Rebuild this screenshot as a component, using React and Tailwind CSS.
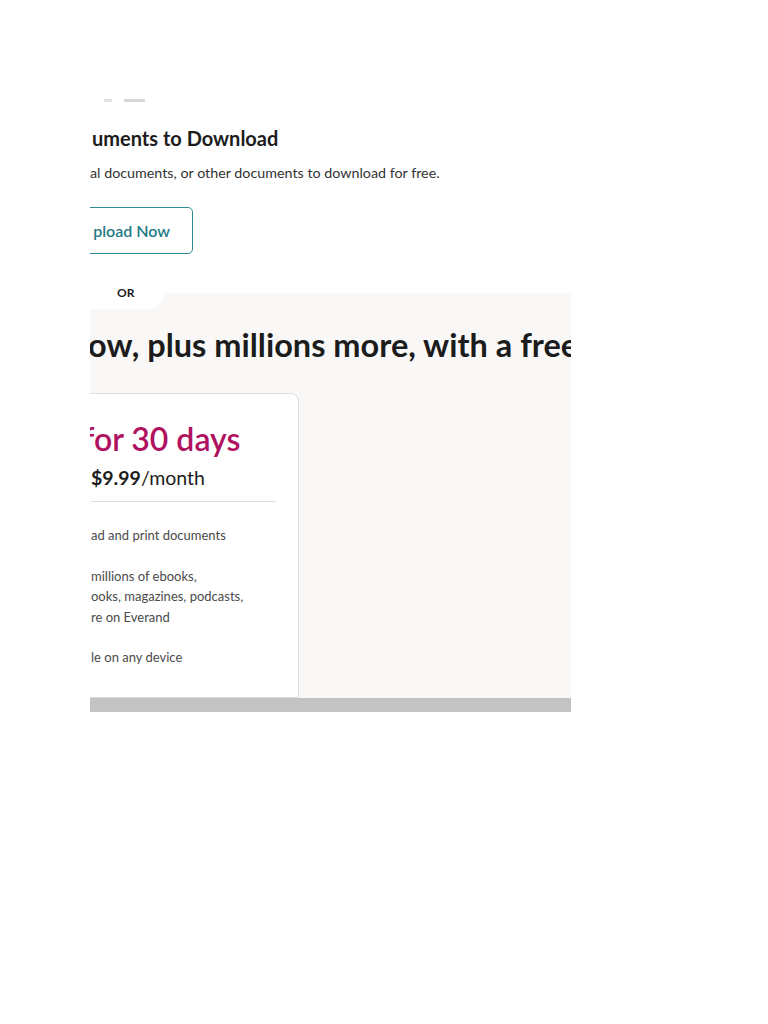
import React from 'react';

// Clipped crop of a document-download upsell panel
const features = [
  ['ad and print documents'],
  ['millions of ebooks,', 'ooks, magazines, podcasts,', 're on Everand'],
  ['le on any device'],
];

export default function App() {
  return (
    <div className="min-h-screen bg-white font-['Lato',sans-serif] text-[#1c1c1c]">
      <div className="ml-[90px] w-[481px] overflow-hidden pt-[94px]">
        {/* faint scan marks */}
        <div className="flex items-end gap-[12px] pl-[14px] h-[8px]">
          <div className="w-[8px] h-[3px] bg-[#e2e2e2]" />
          <div className="w-[21px] h-[3px] bg-[#d6d6d6]" />
        </div>

        <h2 className="mt-[24px] text-[20px] leading-[24px] font-bold pl-[2px] whitespace-nowrap">uments to Download</h2>
        <p className="mt-[13px] text-[14.3px] leading-[20px] text-[#333] whitespace-nowrap">al documents, or other documents to download for free.</p>

        <button className="mt-[24px] -ml-[40px] w-[143px] h-[47px] rounded-[5px] border border-[#2d8a94] flex items-center justify-end pr-[22px] text-[16px] font-semibold text-[#1e7b85]">
          pload Now
        </button>

        <section className="mt-[39px] flow-root bg-[#f9f8f7]">
          <div className="-mt-[16px] h-[32px] w-[73px] bg-white rounded-br-[14px] flex items-center pl-[27px] text-[12px] font-bold">
            OR
          </div>

          <h3 className="mt-[16px] -ml-[2px] text-[32.5px] leading-[40px] font-bold whitespace-nowrap">ow, plus millions more, with a free trial</h3>

          <div className="mt-[28px] -ml-[20px] w-[229px] h-[305px] bg-white border border-[#dcdce4] rounded-tr-[8px] pl-[20px] pr-[22px]">
            <p className="mt-[27px] -ml-[8px] text-[32px] leading-[36px] font-semibold text-[#b0125f] whitespace-nowrap">for 30 days</p>
            <p className="mt-[9px] text-[19.5px] leading-[24px] text-[#1c1c1c] whitespace-nowrap">
              <span className="font-bold">$9.99</span>/month
            </p>
            <div className="mt-[11px] h-px bg-[#dcdce4]" />
            <ul className="mt-[23px] flex flex-col gap-[20px] text-[13px] leading-[20.5px] text-[#4a4a4a]">
              {features.map((lines, i) => (
                <li key={i}>
                  {lines.map((l) => (
                    <div key={l} className="whitespace-nowrap">{l}</div>
                  ))}
                </li>
              ))}
            </ul>
          </div>
        </section>

        <div className="h-[14px] bg-[#c3c3c3]" />
      </div>
    </div>
  );
}
